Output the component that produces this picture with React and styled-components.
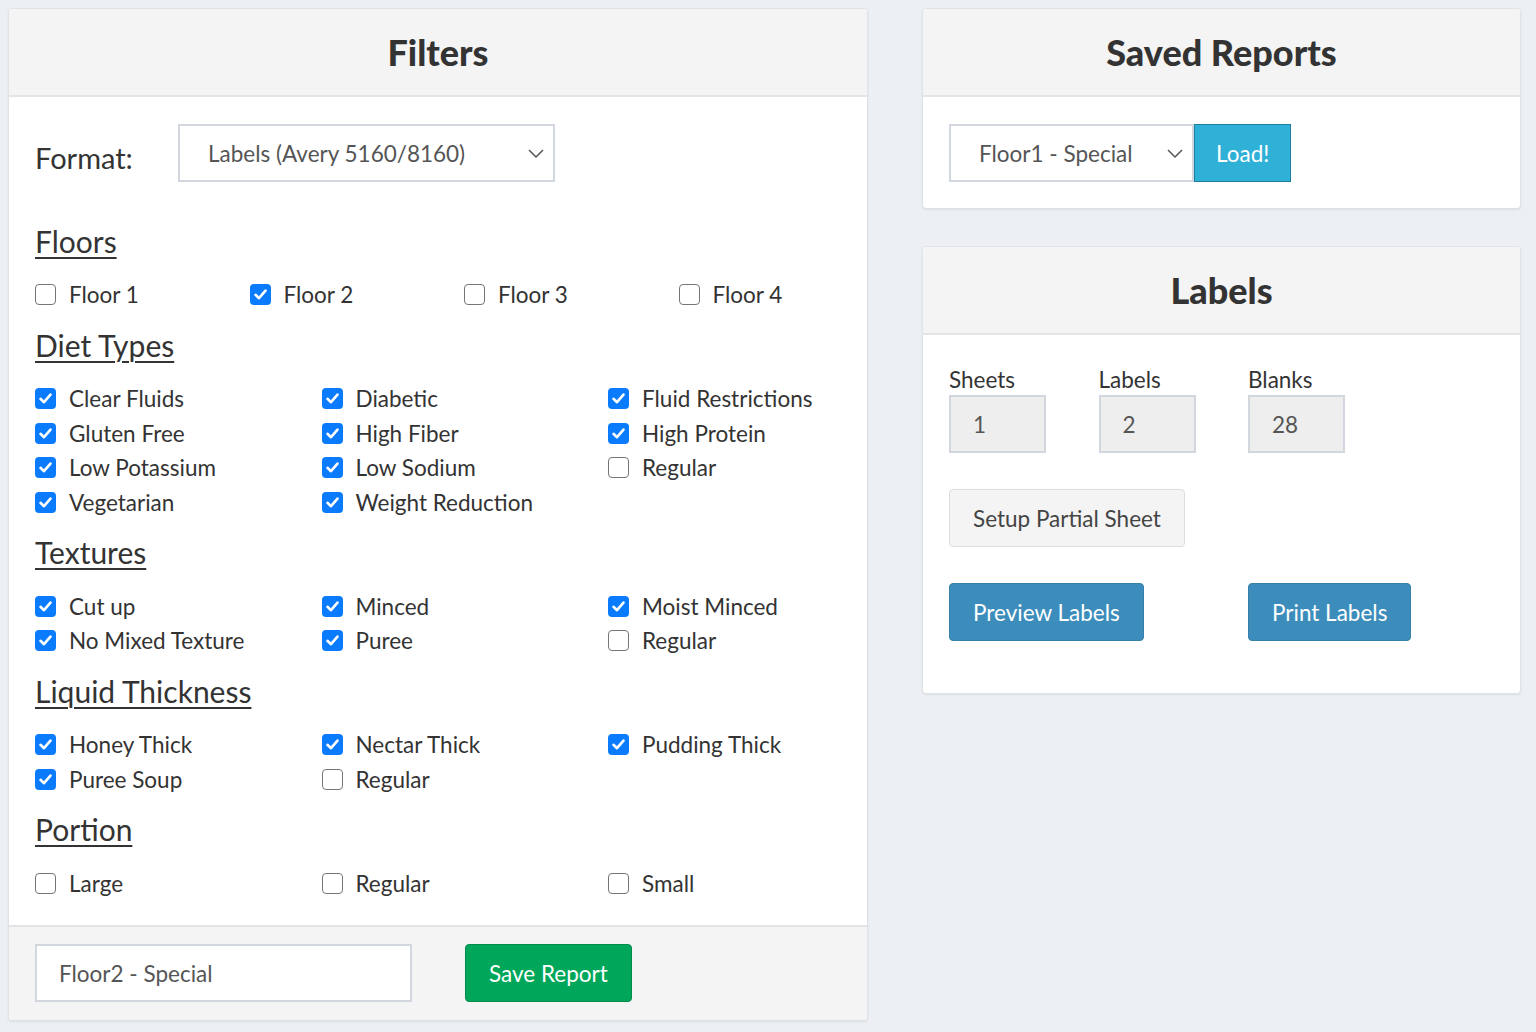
import React from "react"
import styled, { createGlobalStyle } from 'styled-components'

const Global = createGlobalStyle`
  html, body {
    margin: 0;
    padding: 0;
    background: #ecf0f5;
    font-family: Lato, "Open Sans", sans-serif;
    color: #333;
  }
`;

const Page = styled.div`
  display: grid;
  grid-template-columns: 860px 599px;
  column-gap: 54px;
  align-items: start;
  padding: 8px;
`;

const Column = styled.div`
  display: flex;
  flex-direction: column;
  gap: 37px;
`;

const Card = styled.div`
  background: #fff;
  border: 1px solid #dfe2e6;
  border-radius: 4px;
  box-shadow: 0 1px 2px rgba(0,0,0,0.08);
  overflow: hidden;
`;

const CardHead = styled.div`
  height: 86px;
  display: flex;
  align-items: center;
  justify-content: center;
  background: #f4f4f4;
  border-bottom: 2px solid #e2e4e7;
  font-size: 36px;
  font-weight: 900;
  color: #333;
`;

const CardBody = styled.div`
  padding: ${p => p.$pad || '27px 26px 26px'};
`;

const CardFoot = styled.div`
  display: flex;
  align-items: center;
  gap: 53px;
  padding: 17px 26px 18px;
  background: #f4f4f4;
  border-top: 2px solid #e2e4e7;
`;

const FormRow = styled.div`
  display: flex;
  align-items: center;
  margin-bottom: 41px;
`;

const FormLabel = styled.div`
  width: 143px;
  font-size: 29px;
  padding-top: 8px;
`;

const SelectBox = styled.div`
  box-sizing: border-box;
  width: ${p => p.$w}px;
  height: 58px;
  border: 2px solid #d2d6de;
  background: #fff;
  display: flex;
  align-items: center;
  justify-content: space-between;
  padding: 0 8px 0 28px;
  font-size: 22.5px;
  color: #555;
`;

const Chevron = () => (
  <svg width="18" height="12" viewBox="0 0 18 12">
    <path d="M2 3 L9 10 L16 3" fill="none" stroke="#555" strokeWidth="1.5" />
  </svg>
);

const Heading = styled.div`
  font-size: 30px;
  line-height: 36px;
  text-decoration: underline;
  text-underline-offset: 4px;
  text-decoration-thickness: 2px;
  margin-bottom: 18.5px;
`;

const Section = styled.div`
  margin-bottom: 14.5px;
  &:last-child { margin-bottom: 0; }
`;

const Grid = styled.div`
  display: grid;
  grid-template-columns: repeat(${p => p.$cols}, ${p => p.$cols === 4 ? '214.5px' : '286.5px'});
`;

const Item = styled.div`
  display: flex;
  align-items: center;
  height: 34.7px;
  font-size: 22.5px;
  white-space: nowrap;
`;

const Box = styled.span`
  box-sizing: border-box;
  width: 21px;
  height: 21px;
  margin-right: 13px;
  border-radius: 4px;
  display: inline-flex;
  align-items: center;
  justify-content: center;
  background: ${p => p.$on ? '#0b7bfd' : '#fff'};
  border: ${p => p.$on ? 'none' : '1.5px solid #767676'};
  flex-shrink: 0;
`;

const Check = ({ on }) => (
  <Box $on={!!on}>
    {on ? (
      <svg width="15" height="15" viewBox="0 0 15 15">
        <path d="M2.5 7.8 L6 11.2 L12.5 3.6" fill="none" stroke="#fff" strokeWidth="2.6" strokeLinecap="round" strokeLinejoin="round" />
      </svg>
    ) : null}
  </Box>
);

const TextInput = styled.div`
  box-sizing: border-box;
  width: ${p => p.$w}px;
  height: 58px;
  border: 2px solid #d2d6de;
  background: ${p => p.$gray ? '#eee' : '#fff'};
  display: flex;
  align-items: center;
  padding-left: 22px;
  font-size: 22.5px;
  color: #555;
`;

const Button = styled.div`
  box-sizing: border-box;
  height: 58px;
  display: inline-flex;
  align-items: center;
  justify-content: center;
  padding: 0 ${p => p.$flat ? '21px' : '23px'};
  font-size: 22.5px;
  border-radius: ${p => p.$flat ? '0' : '4px'};
  color: ${p => p.$kind === 'default' ? '#444' : '#fff'};
  background: ${p => ({ green: '#00a65a', info: '#2fb0d6', primary: '#3c8dbc', default: '#f4f4f4' }[p.$kind])};
  border: 1px solid ${p => ({ green: '#008d4c', info: '#1f7fa0', primary: '#367fa9', default: '#ddd' }[p.$kind])};
`;

const InlineGroup = styled.div`
  display: flex;
`;

const Fields = styled.div`
  display: grid;
  grid-template-columns: repeat(3, 149.5px);
  margin-bottom: 36px;
`;

const Field = styled.div`
  display: flex;
  flex-direction: column;
  gap: 2px;
  font-size: 22.5px;
`;

const ButtonRow = styled.div`
  display: grid;
  grid-template-columns: 299px auto;
  justify-items: start;
  margin-top: 36px;
`;

const sections = [
  { title: 'Floors', cols: 4, items: [['Floor 1', 0], ['Floor 2', 1], ['Floor 3', 0], ['Floor 4', 0]] },
  { title: 'Diet Types', cols: 3, items: [
    ['Clear Fluids', 1], ['Diabetic', 1], ['Fluid Restrictions', 1],
    ['Gluten Free', 1], ['High Fiber', 1], ['High Protein', 1],
    ['Low Potassium', 1], ['Low Sodium', 1], ['Regular', 0],
    ['Vegetarian', 1], ['Weight Reduction', 1]] },
  { title: 'Textures', cols: 3, items: [
    ['Cut up', 1], ['Minced', 1], ['Moist Minced', 1],
    ['No Mixed Texture', 1], ['Puree', 1], ['Regular', 0]] },
  { title: 'Liquid Thickness', cols: 3, items: [
    ['Honey Thick', 1], ['Nectar Thick', 1], ['Pudding Thick', 1],
    ['Puree Soup', 1], ['Regular', 0]] },
  { title: 'Portion', cols: 3, items: [['Large', 0], ['Regular', 0], ['Small', 0]] },
];

export default () => {
  return (
    <Page>
      <Global />
      <Card>
        <CardHead>Filters</CardHead>
        <CardBody $pad="27px 26px 25px">
          <FormRow>
            <FormLabel>Format:</FormLabel>
            <SelectBox $w={377}>Labels (Avery 5160/8160)<Chevron /></SelectBox>
          </FormRow>
          {sections.map(s => (
            <Section key={s.title}>
              <Heading>{s.title}</Heading>
              <Grid $cols={s.cols}>
                {s.items.map(([label, on], i) => (
                  <Item key={i}><Check on={on} />{label}</Item>
                ))}
              </Grid>
            </Section>
          ))}
        </CardBody>
        <CardFoot>
          <TextInput $w={377}>Floor2 - Special</TextInput>
          <Button $kind="green">Save Report</Button>
        </CardFoot>
      </Card>
      <Column>
        <Card>
          <CardHead>Saved Reports</CardHead>
          <CardBody $pad="27px 26px 26px">
            <InlineGroup>
              <SelectBox $w={245}>Floor1 - Special<Chevron /></SelectBox>
              <Button $kind="info" $flat>Load!</Button>
            </InlineGroup>
          </CardBody>
        </Card>
        <Card>
          <CardHead>Labels</CardHead>
          <CardBody $pad="31px 26px 52px">
            <Fields>
              <Field>Sheets<TextInput $w={97} $gray>1</TextInput></Field>
              <Field>Labels<TextInput $w={97} $gray>2</TextInput></Field>
              <Field>Blanks<TextInput $w={97} $gray>28</TextInput></Field>
            </Fields>
            <Button $kind="default">Setup Partial Sheet</Button>
            <ButtonRow>
              <Button $kind="primary">Preview Labels</Button>
              <Button $kind="primary">Print Labels</Button>
            </ButtonRow>
          </CardBody>
        </Card>
      </Column>
    </Page>
  )
}
